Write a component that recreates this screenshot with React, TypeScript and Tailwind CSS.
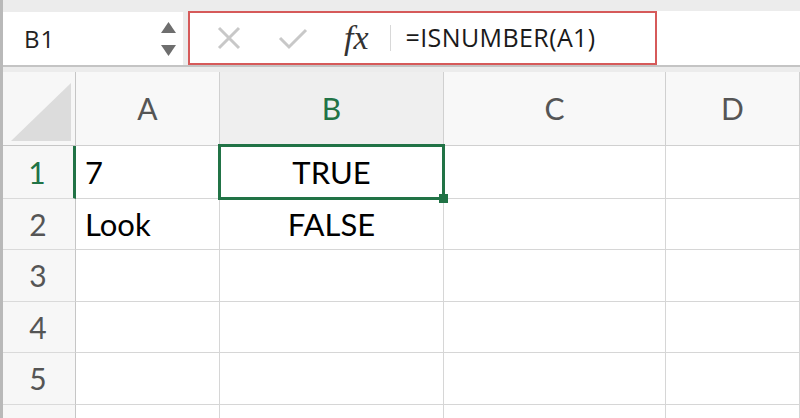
import React from "react";

const COLS = ["A", "B", "C", "D"];
const ROWS = [1, 2, 3, 4, 5, 6];

const DATA: Record<string, { v: string; align: "left" | "center" }> = {
  A1: { v: "7", align: "left" },
  B1: { v: "TRUE", align: "center" },
  A2: { v: "Look", align: "left" },
  B2: { v: "FALSE", align: "center" },
};

export default function App() {
  return (
    <div className="h-[418px] w-[800px] overflow-hidden bg-white font-['Lato','Liberation_Sans',sans-serif]">
      <FormulaBar />
      <Sheet />
    </div>
  );
}

function FormulaBar() {
  return (
    <div className="h-[72px] border-l-[3px] border-[#b9b9b9] bg-[#ececec] pt-[11px]">
      <div className="flex h-[56px] border-b-[2px] border-[#c4c4c4]">
        {/* name box */}
        <div className="mt-[1px] flex w-[180px] items-center justify-between bg-white pl-[21px] pr-[7px]">
          <span className="font-['Open_Sans',sans-serif] text-[24px] tracking-[1px] text-[#222]">B1</span>
          <div className="flex flex-col gap-[12px]">
            <svg width="15" height="11" viewBox="0 0 15 11">
              <path d="M7.5 0 L15 11 L0 11 Z" fill="#6e6e6e" />
            </svg>
            <svg width="15" height="11" viewBox="0 0 15 11">
              <path d="M0 0 L15 0 L7.5 11 Z" fill="#6e6e6e" />
            </svg>
          </div>
        </div>
        <div className="w-[5px]" />
        <div className="flex flex-1 bg-white">
          <div className="flex w-[469px] items-center border-2 border-[#d65a5a] pl-[26px]">
            <svg width="26" height="26" viewBox="0 0 26 26">
              <path d="M3 3 L23 23 M23 3 L3 23" stroke="#c8c8c8" strokeWidth="3" />
            </svg>
            <svg className="ml-[36px]" width="30" height="26" viewBox="0 0 30 26">
              <path d="M2 13 L11 22 L28 5" stroke="#c8c8c8" strokeWidth="3" fill="none" />
            </svg>
            <span className="ml-[36px] font-['Liberation_Serif',serif] text-[34px] italic leading-none text-[#333]">
              fx
            </span>
            <div className="ml-[21px] h-[26px] w-px bg-[#d8d8d8]" />
            <span className="ml-[15px] font-['Open_Sans',sans-serif] text-[25px] tracking-[0.4px] text-[#1a1a1a]">
              =ISNUMBER(A1)
            </span>
          </div>
        </div>
      </div>
    </div>
  );
}

function Sheet() {
  return (
    <div className="grid grid-cols-[73px_144px_224px_222px_1fr] grid-rows-[74px_53px_51px_52px_51px_52px_51px] border-l-[3px] border-[#b9b9b9]">
      {/* corner */}
      <div className="relative border-r border-b border-[#c6c6c6] bg-[#f7f7f7]">
        <svg className="absolute bottom-[4px] right-[4px]" width="60" height="58" viewBox="0 0 60 58">
          <path d="M60 0 L60 58 L0 58 Z" fill="#dcdcdc" />
        </svg>
      </div>
      {COLS.map((c) => (
        <div
          key={c}
          className={
            "flex items-center justify-center border-r border-b border-[#d0d0d0] text-[30px] " +
            (c === "B" ? "bg-[#efefef] text-[#217346]" : "bg-[#f8f8f8] text-[#555]")
          }
        >
          {c}
        </div>
      ))}
      {ROWS.map((r) => (
        <React.Fragment key={r}>
          <div
            className={
              "flex items-center justify-center border-b border-[#dadada] bg-[#f7f7f7] pr-[2px] text-[30px] " +
              (r === 1 ? "border-r-[3px] border-r-[#217346] text-[#217346]" : "border-r border-r-[#c6c6c6] text-[#555]")
            }
          >
            {r < 6 ? r : null}
          </div>
          {COLS.map((c) => {
            const cell = DATA[c + r];
            const sel = c === "B" && r === 1;
            return (
              <div
                key={c}
                className={
                  "relative flex items-center border-r border-b border-[#d6d6d6] px-[9px] text-[31px] text-black " +
                  (cell?.align === "center" ? "justify-center" : "justify-start")
                }
              >
                {cell?.v}
                {sel && (
                  <div className="absolute -top-[2px] -left-[2px] -right-[2px] -bottom-[2px] z-10 border-[3px] border-[#217346]">
                    <div className="absolute -right-[6px] -bottom-[6px] h-[9px] w-[9px] bg-[#217346]" />
                  </div>
                )}
              </div>
            );
          })}
        </React.Fragment>
      ))}
    </div>
  );
}
